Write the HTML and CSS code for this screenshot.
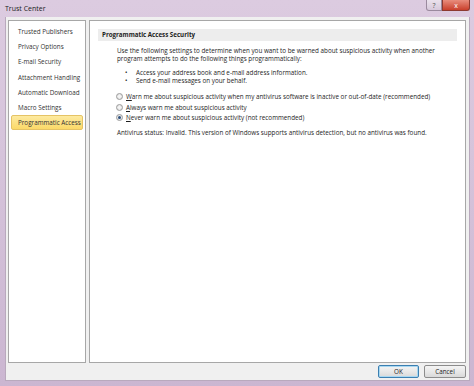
FILE: index.html
```html
<!DOCTYPE html>
<html lang="en">
  <head>
    <meta charset="UTF-8" />
    <title>Trust Center</title>
    <link rel="stylesheet" href="styles.css">
  </head>
  <body>
    <div class="window">
      <div class="titlebar">
        <span class="title">Trust Center</span>
        <div class="caption">
          <span class="help">?</span>
          <span class="close">x</span>
        </div>
      </div>
      <div class="client">
        <div class="panels">
          <ul class="nav">
            <li>Trusted Publishers</li>
            <li>Privacy Options</li>
            <li>E-mail Security</li>
            <li>Attachment Handling</li>
            <li>Automatic Download</li>
            <li>Macro Settings</li>
            <li class="active">Programmatic Access</li>
          </ul>
          <div class="main">
            <div class="section-head">Programmatic Access Security</div>
            <div class="content">
              <p class="intro">Use the following settings to determine when you want to be warned about suspicious activity when another program attempts to do the following things programmatically:</p>
              <ul class="bullets">
                <li>Access your address book and e-mail address information.</li>
                <li>Send e-mail messages on your behalf.</li>
              </ul>
              <div class="options">
                <label class="opt"><span class="radio"></span><span><u>W</u>arn me about suspicious activity when my antivirus software is inactive or out-of-date (recommended)</span></label>
                <label class="opt"><span class="radio"></span><span><u>A</u>lways warn me about suspicious activity</span></label>
                <label class="opt"><span class="radio on"></span><span><u>N</u>ever warn me about suspicious activity (not recommended)</span></label>
              </div>
              <p class="status">Antivirus status: Invalid. This version of Windows supports antivirus detection, but no antivirus was found.</p>
            </div>
          </div>
        </div>
        <div class="buttons">
          <button class="btn default">OK</button>
          <button class="btn">Cancel</button>
        </div>
      </div>
    </div>
  </body>
</html>
```

FILE: styles.css
```css
* {
  margin: 0;
  padding: 0;
  box-sizing: border-box;
}
body {
  font-family: "Open Sans", "DejaVu Sans", sans-serif;
  font-size: 6.3px;
  color: #1e1e1e;
  background: #e6dbe8;
}
.window {
  width: 474px;
  height: 386px;
  display: flex;
  flex-direction: column;
  background: linear-gradient(180deg, #dccbe0 0%, #d6c4db 40%, #cbb6d1 100%);
}
.titlebar {
  height: 17px;
  display: flex;
  justify-content: space-between;
  align-items: flex-start;
  padding-left: 5px;
}
.title {
  font-size: 7px;
  line-height: 17px;
  color: #222;
}
.caption {
  display: flex;
  margin-right: 4px;
}
.caption span {
  height: 11px;
  display: flex;
  align-items: center;
  justify-content: center;
  font-size: 7px;
  border: 1px solid #9a8a9e;
  border-top: none;
}
.help {
  width: 16px;
  color: #555;
  background: linear-gradient(180deg, #eae2ec, #d7c9db);
  border-radius: 0 0 0 3px;
}
.close {
  width: 28px;
  color: #fff;
  background: linear-gradient(180deg, #e88d7d, #c9402c);
  border-color: #8d3a30 !important;
  border-radius: 0 0 3px 0;
}
.client {
  flex: 1;
  margin: 0 4px 5px 5px;
  background: #f0f0f0;
  display: flex;
  flex-direction: column;
  padding: 3px 3px 0 2px;
  border: 1px solid #b9a9bd;
  border-top: none;
}
.panels {
  display: flex;
  gap: 3px;
  height: 343px;
}
.nav {
  list-style: none;
  width: 79px;
  background: #fff;
  border: 1px solid #a7a7a7;
  padding: 3px 2px;
}
.nav li {
  height: 15.2px;
  line-height: 15px;
  padding-left: 7px;
  color: #333;
  white-space: nowrap;
}
.nav li.active {
  background: linear-gradient(180deg, #fdeaa0, #fbd968);
  border: 1px solid #e5c365;
  border-radius: 2px;
  line-height: 13px;
  padding-left: 6px;
}
.main {
  flex: 1;
  background: #fff;
  border: 1px solid #a7a7a7;
  padding: 8px 8px;
}
.section-head {
  background: #ededed;
  height: 12px;
  line-height: 12px;
  padding-left: 4px;
  font-weight: bold;
  font-size: 6.2px;
  color: #222;
}
.content {
  padding: 6px 10px 0 19px;
}
.intro {
  line-height: 8px;
  width: 330px;
}
.bullets {
  margin: 6px 0 0 19px;
  list-style: none;
}
.bullets li {
  line-height: 7.5px;
  position: relative;
}
.bullets li::before {
  content: "\2022";
  position: absolute;
  left: -11px;
}
.options {
  margin-top: 9px;
  display: flex;
  flex-direction: column;
  gap: 3px;
}
.opt {
  display: flex;
  align-items: center;
  gap: 3px;
  height: 7.5px;
  margin-left: -1px;
  white-space: nowrap;
}
.radio {
  width: 7px;
  height: 7px;
  flex-shrink: 0;
  border-radius: 50%;
  border: 1px solid #9b9b9b;
  background: radial-gradient(circle, #f4f4f4 30%, #d6d6d6 100%);
  display: flex;
  align-items: center;
  justify-content: center;
}
.radio.on::after {
  content: "";
  width: 3px;
  height: 3px;
  border-radius: 50%;
  background: #2c4f7c;
}
.status {
  margin-top: 6px;
  white-space: nowrap;
}
.buttons {
  display: flex;
  justify-content: flex-end;
  gap: 5px;
  padding: 2px 0 0;
}
.btn {
  font-family: inherit;
  font-size: 6.3px;
  width: 42px;
  height: 13px;
  border: 1px solid #8c8c8c;
  border-radius: 2px;
  background: linear-gradient(180deg, #f4f4f4 0%, #e8e8e8 50%, #d9d9d9 100%);
  color: #222;
}
.btn.default {
  width: 41px;
  border-color: #3c7fb1;
  box-shadow: inset 0 0 0 1px #a8d8f2;
}
```
